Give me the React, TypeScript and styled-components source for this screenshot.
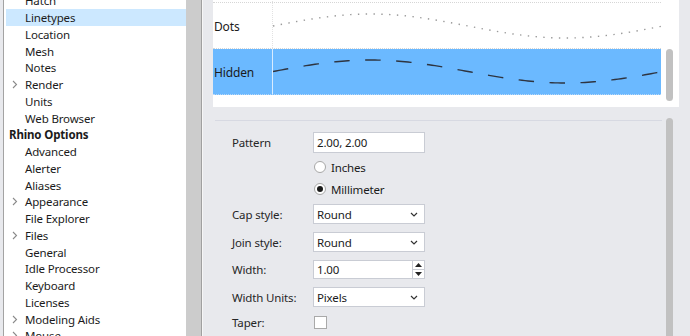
import React from 'react'
import styled, { createGlobalStyle } from 'styled-components'

const GlobalStyle = createGlobalStyle`
  html, body {
    margin: 0;
    padding: 0;
    background: #e8e9ed;
    font-family: "Noto Sans", "Open Sans", sans-serif;
    font-size: 11.5px;
    letter-spacing: -0.15px;
    color: #1b1b1b;
  }
`

type NavItem = { label: string; kind?: 'header' | 'child'; expandable?: boolean; selected?: boolean }

const navItems: NavItem[] = [
  { label: 'Hatch' },
  { label: 'Linetypes', selected: true },
  { label: 'Location' },
  { label: 'Mesh' },
  { label: 'Notes' },
  { label: 'Render', expandable: true },
  { label: 'Units' },
  { label: 'Web Browser' },
  { label: 'Rhino Options', kind: 'header' },
  { label: 'Advanced' },
  { label: 'Alerter' },
  { label: 'Aliases' },
  { label: 'Appearance', expandable: true },
  { label: 'File Explorer' },
  { label: 'Files', expandable: true },
  { label: 'General' },
  { label: 'Idle Processor' },
  { label: 'Keyboard' },
  { label: 'Licenses' },
  { label: 'Modeling Aids', expandable: true },
  { label: 'Mouse', expandable: true },
]

const WAVE_WIDTH = 390

// one full sine period across the preview cell
function wavePoints(mid: number, amp: number) {
  const pts: string[] = []
  for (let x = 0; x <= WAVE_WIDTH; x += 3) {
    const y = mid - amp * Math.sin((2 * Math.PI * x) / WAVE_WIDTH)
    pts.push(`${x},${y.toFixed(2)}`)
  }
  return pts.join(' ')
}

const Chevron = () => (
  <svg width="6" height="9" viewBox="0 0 6 9">
    <path d="M1 1 L4.5 4.5 L1 8" fill="none" stroke="#8a8a8a" strokeWidth="1.1" />
  </svg>
)

const DropArrow = () => (
  <svg width="8" height="5" viewBox="0 0 8 5">
    <path d="M1 1 L4 4 L7 1" fill="none" stroke="#333" strokeWidth="1.2" />
  </svg>
)

const App: React.FC = () => {
  return (
    <>
      <GlobalStyle />
      <Window>
        <Sidebar>
          <NavList>
            {navItems.map((item) => (
              <NavRow key={item.label} $selected={item.selected} $header={item.kind === 'header'}>
                {item.expandable && (
                  <Expander>
                    <Chevron />
                  </Expander>
                )}
                {item.label}
              </NavRow>
            ))}
          </NavList>
        </Sidebar>
        <Splitter />
        <Main>
          <ListBox>
            <ListInner>
              <TypeRow>
                <NameCell />
                <PreviewCell />
              </TypeRow>
              <TypeRow>
                <NameCell>Dots</NameCell>
                <PreviewCell>
                  <svg width={WAVE_WIDTH} height="46">
                    <polyline
                      points={wavePoints(23, 12)}
                      fill="none"
                      stroke="#9a9a9a"
                      strokeWidth="1.4"
                      strokeDasharray="1.4 6.4"
                    />
                  </svg>
                </PreviewCell>
              </TypeRow>
              <TypeRow $selected>
                <NameCell $selected>Hidden</NameCell>
                <PreviewCell $selected>
                  <svg width={WAVE_WIDTH} height="45">
                    <polyline
                      points={wavePoints(22.5, 11.5)}
                      fill="none"
                      stroke="#2e3440"
                      strokeWidth="1.4"
                      strokeDasharray="15.5 15.5"
                    />
                  </svg>
                </PreviewCell>
              </TypeRow>
            </ListInner>
            <ScrollThumb $top={49} $height={52} />
          </ListBox>

          <SettingsPanel>
            <Rule />
            <Form>
              <FieldRow $height={21} $mt={11}>
                <Label>Pattern</Label>
                <TextInput $width={112}>2.00, 2.00</TextInput>
              </FieldRow>
              <FieldRow $height={22} $mt={3}>
                <Label />
                <Radio />
                <RadioText>Inches</RadioText>
              </FieldRow>
              <FieldRow $height={22} $mt={0}>
                <Label />
                <Radio $checked />
                <RadioText>Millimeter</RadioText>
              </FieldRow>
              <FieldRow $height={20} $mt={4}>
                <Label>Cap style:</Label>
                <Select>
                  Round
                  <DropArrow />
                </Select>
              </FieldRow>
              <FieldRow $height={20} $mt={8}>
                <Label>Join style:</Label>
                <Select>
                  Round
                  <DropArrow />
                </Select>
              </FieldRow>
              <FieldRow $height={19} $mt={8}>
                <Label>Width:</Label>
                <Spinner>
                  <SpinText>1.00</SpinText>
                  <SpinButtons>
                    <SpinButton>
                      <svg width="7" height="4" viewBox="0 0 7 4">
                        <path d="M0 4 L3.5 0 L7 4 Z" fill="#222" />
                      </svg>
                    </SpinButton>
                    <SpinButton>
                      <svg width="7" height="4" viewBox="0 0 7 4">
                        <path d="M0 0 L3.5 4 L7 0 Z" fill="#222" />
                      </svg>
                    </SpinButton>
                  </SpinButtons>
                </Spinner>
              </FieldRow>
              <FieldRow $height={20} $mt={8}>
                <Label>Width Units:</Label>
                <Select>
                  Pixels
                  <DropArrow />
                </Select>
              </FieldRow>
              <FieldRow $height={14} $mt={8}>
                <Label>Taper:</Label>
                <Checkbox />
              </FieldRow>
            </Form>
            <ScrollThumb $top={0} $height={260} />
          </SettingsPanel>
        </Main>
      </Window>
    </>
  )
}

const Window = styled.div`
  display: flex;
  width: 690px;
  height: 336px;
  overflow: hidden;
  background: #e8e9ed;
`

const Sidebar = styled.div`
  width: 182px;
  margin-left: 3px;
  border-left: 1px solid #a3a3a3;
  background: #fff;
  overflow: hidden;
`

const NavList = styled.div`
  margin-top: -7.75px;
  padding-left: 2px;
`

const NavRow = styled.div<{ $selected?: boolean; $header?: boolean }>`
  position: relative;
  box-sizing: border-box;
  height: 16.75px;
  padding-top: 1px;
  line-height: 16px;
  padding-left: ${(p) => (p.$header ? '3px' : '19px')};
  font-weight: ${(p) => (p.$header ? 700 : 400)};
  background: ${(p) => (p.$selected ? '#cce8ff' : 'transparent')};
  white-space: nowrap;
`

const Expander = styled.span`
  position: absolute;
  left: 6px;
  top: 4px;
  display: flex;
`

const Splitter = styled.div`
  width: 15px;
  background: #cccccc;
  border-right: 1px solid #a0a0a0;
  box-shadow: 1px 0 0 #f6f6f6;
`

const Main = styled.div`
  flex: 1;
  display: flex;
  flex-direction: column;
  padding: 0 11px 0 11px;
`

const ListBox = styled.div`
  position: relative;
  height: 107px;
  background: #fff;
  overflow: hidden;
`

const ListInner = styled.div`
  width: 448px;
  margin-top: -43px;
`

const TypeRow = styled.div<{ $selected?: boolean }>`
  display: flex;
  height: 45px;
  border-bottom: 1px dotted ${(p) => (p.$selected ? '#b8d8f8' : '#d6d6d6')};
  background: ${(p) => (p.$selected ? '#6bb9ff' : '#fff')};
`

const NameCell = styled.div<{ $selected?: boolean }>`
  width: 58px;
  display: flex;
  align-items: center;
  padding-left: 1px;
  padding-top: 2px;
  border-right: 1px ${(p) => (p.$selected ? 'solid #d8ecff' : 'dotted #e2e2e2')};
  color: #1b1b1b;
  font-size: 12px;
`

const PreviewCell = styled.div<{ $selected?: boolean }>`
  flex: 1;
  display: flex;
  align-items: flex-start;
  overflow: hidden;
`

const ScrollThumb = styled.div<{ $top: number; $height: number }>`
  position: absolute;
  right: 6px;
  top: ${(p) => p.$top}px;
  width: 7px;
  height: ${(p) => p.$height}px;
  border-radius: 4px;
  background: #c1c1c1;
`

const SettingsPanel = styled.div`
  position: relative;
  flex: 1;
  margin-top: 11px;
`

const Rule = styled.div`
  margin: 2px 17px 0 2px;
  height: 1px;
  background: #d7d9e2;
`

const Form = styled.div`
  display: flex;
  flex-direction: column;
  padding-left: 19px;
`

const FieldRow = styled.div<{ $height: number; $mt: number }>`
  display: flex;
  align-items: center;
  height: ${(p) => p.$height}px;
  margin-top: ${(p) => p.$mt}px;
`

const Label = styled.div`
  width: 81px;
  flex-shrink: 0;
  color: #262626;
`

const TextInput = styled.div<{ $width: number }>`
  box-sizing: border-box;
  width: ${(p) => p.$width}px;
  height: 100%;
  padding-left: 3px;
  display: flex;
  align-items: center;
  background: #fff;
  border: 1px solid #c9ccd4;
`

const Radio = styled.span<{ $checked?: boolean }>`
  box-sizing: border-box;
  width: 12px;
  height: 12px;
  margin-left: 1px;
  border-radius: 50%;
  border: 1px solid #a7a7a7;
  background: #fff;
  display: flex;
  align-items: center;
  justify-content: center;

  &::after {
    content: '';
    display: ${(p) => (p.$checked ? 'block' : 'none')};
    width: 6px;
    height: 6px;
    border-radius: 50%;
    background: #1a1a1a;
  }
`

const RadioText = styled.span`
  margin-left: 5px;
`

const Select = styled.div`
  box-sizing: border-box;
  width: 112px;
  height: 100%;
  padding: 0 6px 0 3px;
  display: flex;
  align-items: center;
  justify-content: space-between;
  background: #fff;
  border: 1px solid #c9ccd4;
`

const Spinner = styled.div`
  box-sizing: border-box;
  width: 112px;
  height: 100%;
  display: flex;
  background: #fff;
  border: 1px solid #c9ccd4;
`

const SpinText = styled.div`
  flex: 1;
  display: flex;
  align-items: center;
  padding-left: 3px;
`

const SpinButtons = styled.div`
  width: 11px;
  display: flex;
  flex-direction: column;
  border-left: 1px solid #c9ccd4;
`

const SpinButton = styled.div`
  flex: 1;
  display: flex;
  align-items: center;
  justify-content: center;

  & + & {
    border-top: 1px solid #c9ccd4;
  }
`

const Checkbox = styled.span`
  box-sizing: border-box;
  width: 13px;
  height: 13px;
  margin-left: 1px;
  border: 1px solid #a9a9a9;
  background: #fff;
`

export default App
